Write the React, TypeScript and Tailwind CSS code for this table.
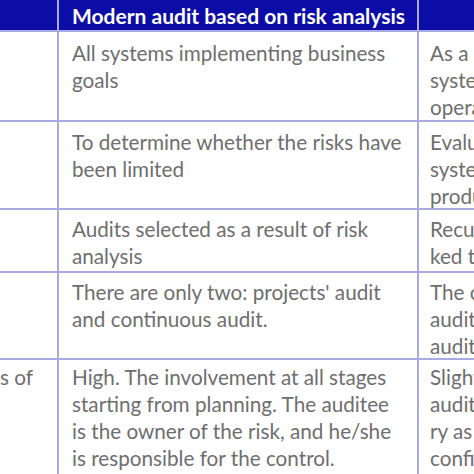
import React from "react";

const font = { fontFamily: "Lato, 'Open Sans', sans-serif" };

type Row = { h: string; left: string[]; mid: string[]; right: string[]; pt: string };

const rows: Row[] = [
  {
    h: "h-[88px]",
    pt: "pt-[8px]",
    left: [],
    mid: ["All systems implementing business", "goals"],
    right: ["As a", "systems", "operations"],
  },
  {
    h: "h-[86px]",
    pt: "pt-[7px]",
    left: [],
    mid: ["To determine whether the risks have", "been limited"],
    right: ["Evaluation", "systems", "products"],
  },
  {
    h: "h-[61px]",
    pt: "pt-[6px]",
    left: [],
    mid: ["Audits selected as a result of risk", "analysis"],
    right: ["Recurring", "ked to"],
  },
  {
    h: "h-[85px]",
    pt: "pt-[6px]",
    left: [],
    mid: ["There are only two: projects' audit", "and continuous audit."],
    right: ["The compliance", "audits", "audits"],
  },
  {
    h: "h-[114px]",
    pt: "pt-[4px]",
    left: ["s of"],
    mid: [
      "High. The involvement at all stages",
      "starting from planning. The auditee",
      "is the owner of the risk, and he/she",
      "is responsible for the control.",
    ],
    right: ["Slight", "auditee", "ry as", "confirm"],
  },
];

function Lines({ lines }: { lines: string[] }) {
  return (
    <>
      {lines.map((l, i) => (
        <div key={i} className="whitespace-nowrap leading-[27px]">
          {l}
        </div>
      ))}
    </>
  );
}

export default function App() {
  return (
    <div
      className="w-[474px] h-[474px] overflow-hidden bg-white text-[20.7px] text-[#6e6e6e]"
      style={font}
    >
      <div className="grid grid-cols-[57px_358px_80px] gap-[2px] bg-[#a9a9e3]">
        <div className="h-[30px] bg-[#0c0ca6]" />
        <div className="h-[30px] bg-[#0c0ca6] pl-[13px] pt-[1px] text-[21px] text-white font-bold leading-[30px] whitespace-nowrap">
          Modern audit based on risk analysis
        </div>
        <div className="h-[30px] bg-[#0c0ca6]" />
        {rows.map((r, i) => (
          <React.Fragment key={i}>
            <div className={`${r.h} ${r.pt} bg-white overflow-hidden`}>
              <Lines lines={r.left} />
            </div>
            <div className={`${r.h} ${r.pt} bg-white pl-[13px] overflow-hidden`}>
              <Lines lines={r.mid} />
            </div>
            <div className={`${r.h} ${r.pt} bg-white pl-[11px] overflow-hidden`}>
              <Lines lines={r.right} />
            </div>
          </React.Fragment>
        ))}
      </div>
    </div>
  );
}
